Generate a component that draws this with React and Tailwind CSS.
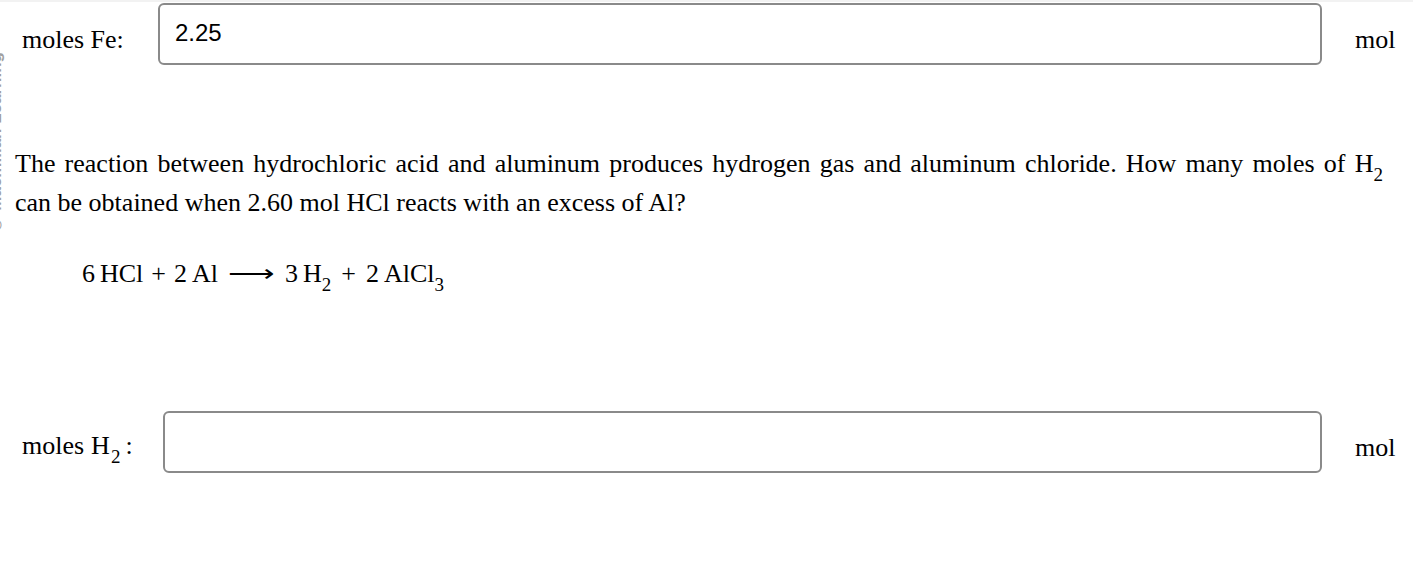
function Sub({ children, className }) {
  return (
    <sub className={"text-[19px] relative top-[3px] align-sub leading-none " + (className || "")}>
      {children}
    </sub>
  );
}

function AnswerRow({ label, value, labelGap, className }) {
  return (
    <div className={"flex items-center pl-[22px] " + (className || "")}>
      <div className="text-[26px] leading-none pt-[12px] whitespace-nowrap" style={{ width: labelGap }}>
        {label}
      </div>
      <div className="flex-1 h-[62px] border-2 border-[#8a8a8a] rounded-[6px] flex items-center px-[15px]">
        <span
          className="text-[24px] leading-none -mt-[3px]"
          style={{ fontFamily: '"Liberation Sans", Arial, sans-serif' }}
        >
          {value}
        </span>
      </div>
      <div className="w-[91px] pl-[33px] text-[26px] leading-none pt-[12px]">mol</div>
    </div>
  );
}

export default function App() {
  return (
    <div
      className="relative w-[1413px] h-[578px] bg-white overflow-hidden text-black"
      style={{ fontFamily: '"Liberation Serif", "Times New Roman", serif' }}
    >
      <div
        className="absolute left-[-13px] top-[52px] text-[17px] font-bold text-[#a0a0a0] leading-[18px] [writing-mode:vertical-rl] rotate-180"
        style={{ fontFamily: '"Liberation Sans", Arial, sans-serif' }}
      >
        © Macmillan Learning
      </div>

      <div className="h-[2px] bg-[#f2f2f2]" />

      <AnswerRow label="moles Fe:" value="2.25" labelGap={136} className="mt-[1px]" />

      <div className="pl-[15px] mt-[79px] text-[26px] leading-[39px]">
        <div className="w-[1368px] text-justify [text-align-last:justify]">
          The reaction between hydrochloric acid and aluminum produces hydrogen gas and aluminum chloride. How many moles of H
          <Sub>2</Sub>
        </div>
        <div>can be obtained when 2.60 mol HCl reacts with an excess of Al?</div>
      </div>

      <div className="pl-[82px] mt-[32px] text-[26px] leading-[39px] whitespace-nowrap">
        <span>6</span>
        <span className="ml-[5px]">HCl</span>
        <span className="mx-[8px]">+</span>
        <span>2</span>
        <span className="ml-[5px]">Al</span>
        <span className="ml-[10px] mr-[10px] inline-block scale-x-[1.25] origin-left">⟶</span>
        <span className="ml-[10px]">3</span>
        <span className="ml-[5px]">H</span>
        <Sub>2</Sub>
        <span className="mx-[10px]">+</span>
        <span>2</span>
        <span className="ml-[5px]">AlCl</span>
        <Sub>3</Sub>
      </div>

      <AnswerRow
        label={
          <>
            moles<span className="ml-[7px]">H</span>
            <Sub className="ml-[1px]">2</Sub>
            <span className="ml-[5px]">:</span>
          </>
        }
        value=""
        labelGap={141}
        className="mt-[118px]"
      />
    </div>
  );
}
